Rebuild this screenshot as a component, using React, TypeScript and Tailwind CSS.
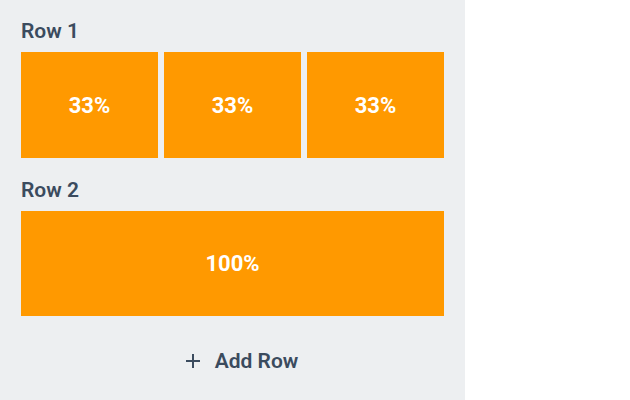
import React from "react";

const font = { fontFamily: "Roboto, 'Noto Sans', sans-serif" };

function Tile({ label }: { label: string }) {
  return (
    <div className="flex flex-1 items-center justify-center bg-[#ff9900] text-[22px] font-bold text-white">
      {label}
    </div>
  );
}

export default function App() {
  return (
    <div className="flex h-[400px] w-[630px] bg-white" style={font}>
      <div className="flex h-full w-[465px] flex-col bg-[#edeff1] px-[21px] pt-[19px]">
        <div className="text-[21px] font-semibold leading-[24px] text-[#3b4b5e]">Row 1</div>
        <div className="mt-[9px] flex h-[106px] gap-[6px]">
          <Tile label="33%" />
          <Tile label="33%" />
          <Tile label="33%" />
        </div>
        <div className="mt-[20px] text-[21px] font-semibold leading-[24px] text-[#3b4b5e]">Row 2</div>
        <div className="mt-[9px] flex h-[105px]">
          <Tile label="100%" />
        </div>
        <div className="mt-[33px] flex items-center justify-center gap-[14px] pl-[18px] text-[21px] font-semibold leading-[24px] text-[#3b4b5e]">
          <svg width="16" height="16" viewBox="0 0 16 16" fill="none" stroke="#3b4b5e" strokeWidth="2">
            <path d="M8 1v14M1 8h14" />
          </svg>
          <span>Add Row</span>
        </div>
      </div>
    </div>
  );
}
